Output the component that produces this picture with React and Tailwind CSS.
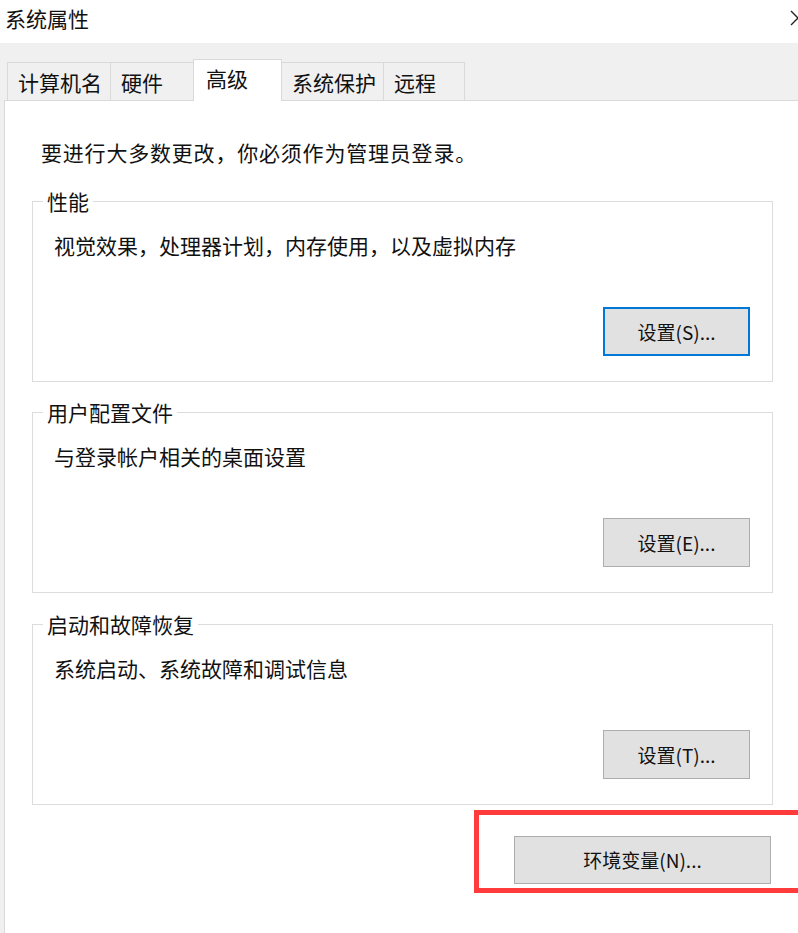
import React from 'react';

const font = { fontFamily: '"Noto Sans CJK SC", "Noto Sans", sans-serif' };

const tabs = [
  { label: '计算机名', w: 'w-[104px]' },
  { label: '硬件', w: 'w-[84px]' },
  { label: '高级', w: 'w-[89px]', active: true },
  { label: '系统保护', w: 'w-[103px]' },
  { label: '远程', w: 'w-[82px]' },
];

function Tab({ label, w, active }) {
  if (active) {
    return (
      <div className={`${w} -ml-px h-[42px] -mb-px relative z-10 bg-white border border-b-0 border-[#d9d9d9] pl-[12px] pt-[6px] leading-[24px]`}>
        {label}
      </div>
    );
  }
  return (
    <div className={`${w} -ml-px first:ml-0 h-[38px] bg-[#f0f0f0] border border-b-0 border-[#d9d9d9] pl-[10px] pt-[7px] leading-[24px]`}>
      {label}
    </div>
  );
}

function SettingsButton({ label, focused }) {
  return (
    <button
      type="button"
      className={
        focused
          ? 'w-[147px] h-[49px] bg-[#e1e1e1] border-2 border-[#0078d7] text-[19px] leading-[24px] text-[#111]'
          : 'w-[147px] h-[49px] bg-[#e1e1e1] border border-[#adadad] text-[19px] leading-[24px] text-[#111]'
      }
    >
      {label}
    </button>
  );
}

function Group({ legend, desc, button, focused, className }) {
  return (
    <fieldset className={`w-[741px] h-[193px] border border-[#dcdcdc] ${className || ''}`}>
      <legend className="ml-[10px] px-[4px] leading-[24px]">{legend}</legend>
      <div className="px-[21px]">
        <p className="mt-[20px] leading-[24px]">{desc}</p>
        <div className="mt-[50px] flex justify-end pr-[1px]">
          <SettingsButton label={button} focused={focused} />
        </div>
      </div>
    </fieldset>
  );
}

export default function App() {
  return (
    <div className="w-[798px] h-[933px] overflow-hidden bg-[#f0f0f0]">
      <div className="w-[830px] h-full flex flex-col text-[21px] text-[#111]" style={font}>
        <div className="h-[43px] bg-white flex items-center pl-[5px] shrink-0">
          <span className="leading-[24px] -mt-[8px]">系统属性</span>
          <svg className="ml-auto mr-[24px] -mt-[8px]" width="16" height="16" viewBox="0 0 16 16">
            <path d="M1 1 L15 15 M15 1 L1 15" stroke="#222" strokeWidth="1.4" fill="none" />
          </svg>
        </div>

        <div className="h-[57px] flex items-end pl-[7px] shrink-0">
          {tabs.map((t) => (
            <Tab key={t.label} {...t} />
          ))}
        </div>

        <div className="flex-1 ml-[4px] bg-white border-t border-l border-[#d9d9d9] pl-[27px] pt-[39px]">
          <p className="pl-[9px] leading-[24px] tracking-[0.8px]">要进行大多数更改，你必须作为管理员登录。</p>

          <Group
            className="mt-[25px]"
            legend="性能"
            desc="视觉效果，处理器计划，内存使用，以及虚拟内存"
            button="设置(S)..."
            focused
          />
          <Group
            className="mt-[18px]"
            legend="用户配置文件"
            desc="与登录帐户相关的桌面设置"
            button="设置(E)..."
          />
          <Group
            className="mt-[19px]"
            legend="启动和故障恢复"
            desc="系统启动、系统故障和调试信息"
            button="设置(T)..."
          />

          <div className="mt-[5px] ml-[442px] w-[360px] h-[83px] border-[5px] border-[#ff3b3b] pl-[35px] pt-[21px]">
            <button
              type="button"
              className="w-[257px] h-[48px] bg-[#e1e1e1] border border-[#adadad] text-[19px] leading-[24px] text-[#111]"
            >
              环境变量(N)...
            </button>
          </div>
        </div>
      </div>
    </div>
  );
}
